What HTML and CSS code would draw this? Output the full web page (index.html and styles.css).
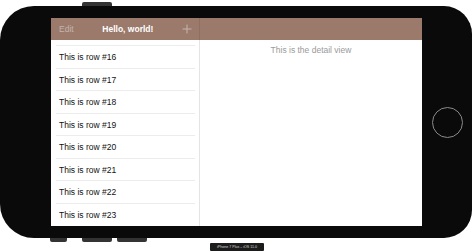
FILE: index.html
```html
<!DOCTYPE html>
<html lang="en">
<head>
    <meta charset="UTF-8">
    <meta name="viewport" content="width=device-width, initial-scale=1.0">
    <title>Simulator</title>
    <link rel="stylesheet" href="styles.css">
</head>
<body>
    <div class="top-keys">
        <div class="key key-wide"></div>
    </div>

    <div class="phone">
        <div class="screen">
            <div class="nav">
                <div class="nav-master">
                    <span class="nav-edit">Edit</span>
                    <span class="nav-title">Hello, world!</span>
                    <svg class="nav-add" width="10" height="10" viewBox="0 0 10 10">
                        <path d="M5 0.5V9.5M0.5 5H9.5" stroke="currentColor" stroke-width="1" fill="none"/>
                    </svg>
                </div>
                <div class="nav-detail"></div>
            </div>
            <div class="panes">
                <ul class="master">
                    <li>This is row #16</li>
                    <li>This is row #17</li>
                    <li>This is row #18</li>
                    <li>This is row #19</li>
                    <li>This is row #20</li>
                    <li>This is row #21</li>
                    <li>This is row #22</li>
                    <li>This is row #23</li>
                </ul>
                <div class="detail">
                    <p>This is the detail view</p>
                </div>
            </div>
        </div>
        <div class="home-area">
            <div class="home-button"></div>
        </div>
    </div>

    <div class="bottom-keys">
        <div class="key key-small"></div>
        <div class="key key-wide"></div>
        <div class="key key-wide"></div>
        <div class="device-label">iPhone 7 Plus – iOS 11.0</div>
    </div>
</body>
</html>
```

FILE: styles.css
```css
body {
    margin: 0;
    background: #fff;
    font-family: 'Liberation Sans', Arial, sans-serif;
    width: 474px;
    height: 252px;
    overflow: hidden;
}
.top-keys {
    height: 6px;
    padding-left: 82px;
    display: flex;
    align-items: flex-end;
}
.key {
    background: #333;
    height: 4px;
}
.top-keys .key {
    border-radius: 2px 2px 0 0;
}
.key-wide {
    width: 30px;
}
.key-small {
    width: 17px;
}
.phone {
    width: 472px;
    height: 232px;
    background: #0a0a0a;
    border-radius: 34px 28px 28px 34px;
    display: flex;
    align-items: center;
    padding-left: 51px;
    box-sizing: border-box;
}
.screen {
    width: 371px;
    height: 208px;
    background: #fff;
    display: flex;
    flex-direction: column;
    overflow: hidden;
}
.nav {
    height: 22px;
    background: #9b7a6b;
    display: flex;
    flex-shrink: 0;
}
.nav-master {
    width: 149px;
    display: flex;
    align-items: center;
    justify-content: space-between;
    padding: 0 7px 0 8px;
    box-sizing: border-box;
    border-right: 1px solid #8e7063;
    color: #c4b4ad;
    font-size: 8.5px;
}
.nav-title {
    color: #fff;
    font-weight: bold;
}
.nav-add {
    display: block;
}
.nav-detail {
    flex: 1;
}
.panes {
    flex: 1;
    display: flex;
}
.master {
    list-style: none;
    margin: 0;
    padding: 5px 4px 0 5px;
    width: 149px;
    box-sizing: border-box;
    border-right: 1px solid #e4e4e4;
}
.master li {
    height: 22.5px;
    line-height: 22.5px;
    border-top: 1px solid #ececec;
    box-sizing: border-box;
    padding-left: 3px;
    font-size: 8.5px;
    color: #111;
}
.detail {
    flex: 1;
    text-align: center;
}
.detail p {
    margin: 5px 0 0;
    font-size: 8.5px;
    color: #9a9a9a;
}
.home-area {
    flex: 1;
    display: flex;
    justify-content: center;
    align-items: center;
}
.home-button {
    width: 31px;
    height: 31px;
    border: 1px solid #8a8a8a;
    border-radius: 50%;
    box-sizing: border-box;
}
.bottom-keys {
    display: flex;
    align-items: flex-start;
    padding-left: 50px;
}
.bottom-keys .key {
    border-radius: 0 0 2px 2px;
}
.bottom-keys .key-small {
    margin-right: 15px;
}
.bottom-keys .key-wide + .key-wide {
    margin-left: 5px;
}
.device-label {
    margin: 5px 0 0 63px;
    width: 54px;
    height: 8px;
    line-height: 8px;
    background: #1c1c1c;
    color: #ddd;
    font-size: 3.6px;
    text-align: center;
    border-radius: 1px;
    white-space: nowrap;
}
```
